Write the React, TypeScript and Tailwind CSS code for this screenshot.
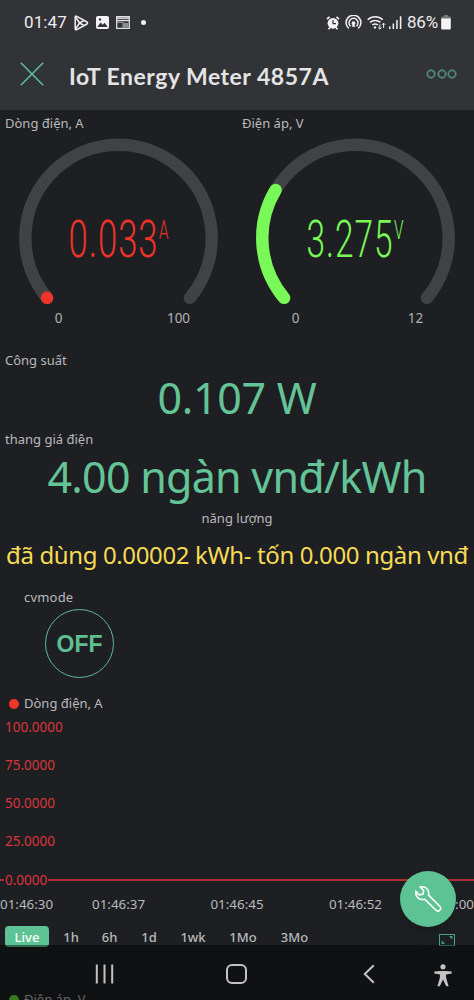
const ui = "font-['Noto_Sans',sans-serif]";

function polar(cx: number, cy: number, r: number, deg: number) {
  const a = (deg * Math.PI) / 180;
  return { x: cx + r * Math.cos(a), y: cy + r * Math.sin(a) };
}

// Arc opens at the bottom, 260 degrees in total
function arc(from: number, to: number) {
  const s = polar(118.5, 106, 93.2, from);
  const e = polar(118.5, 106, 93.2, to);
  return `M${s.x} ${s.y}A93.2 93.2 0 ${to - from > 180 ? 1 : 0} 1 ${e.x} ${e.y}`;
}

type GaugeProps = {
  label: string;
  value: string;
  unit: string;
  max: string;
  maxX: number;
  color: string;
  sweep: number;
  valueX: number;
  valueWidth: number;
};

function Gauge({ label, value, unit, max, maxX, color, sweep, valueX, valueWidth }: GaugeProps) {
  return (
    <div className="w-[237px] pt-1">
      <div className="pl-[5px] text-[13px] leading-[18px] text-[#b9babc]">{label}</div>
      <svg width="237" height="200" viewBox="0 0 237 200" className="block">
        <path d={arc(140, 400)} fill="none" stroke="#414246" strokeWidth="12.4" strokeLinecap="round" />
        <path d={arc(140, 140 + sweep)} fill="none" stroke={color} strokeWidth="12.4" strokeLinecap="round" />
        <text x={valueX} y="124.5" fill={color} fontFamily="Roboto, sans-serif" fontWeight="300" fontSize="52" letterSpacing="1.5" textLength={valueWidth} lengthAdjust="spacingAndGlyphs">
          {value}
        </text>
        <text x={valueX + valueWidth + 0.5} y="106.5" fill={color} fontFamily="Roboto, sans-serif" fontWeight="300" fontSize="26" textLength="9.5" lengthAdjust="spacingAndGlyphs">
          {unit}
        </text>
        <text x="58.5" y="190.8" textAnchor="middle" fill="#b0b1b3" fontFamily="Noto Sans, sans-serif" fontSize="13.5">0</text>
        <text x={maxX} y="190.8" textAnchor="middle" fill="#b0b1b3" fontFamily="Noto Sans, sans-serif" fontSize="13.5">{max}</text>
      </svg>
    </div>
  );
}

function StatusBar() {
  return (
    <div className="flex h-[44px] items-center pl-6 pr-[23px] font-[Roboto,sans-serif] text-[17px] text-[#ededee]">
      <span className="mt-[2px] w-[50px] tracking-[0.1px]">01:47</span>
      <svg width="15" height="16" viewBox="0 0 15 16" fill="none" stroke="#f1f1f2" strokeWidth="1.5" strokeLinejoin="round" className="mt-px">
        <path d="M1.2 2.2Q1.4.8 2.8 1.3L13 7q1 1 0 2L2.8 14.7q-1.4.5-1.6-.9z" />
        <path d="M1.5 2 5.6 8 1.5 14M5.6 8l4.6-2.6M5.6 8l4.6 2.6" />
      </svg>
      <svg width="13" height="13" viewBox="0 0 13 13" className="ml-[7px] mt-px">
        <rect width="13" height="13" rx="2" fill="#f4f4f5" />
        <path d="M1.3 11 4.6 6.4 6.8 8.8 8.6 6.8 11.7 11z" fill="#323337" />
        <circle cx="4" cy="3.4" r="1.2" fill="#323337" />
      </svg>
      <svg width="14" height="13" viewBox="0 0 14 13" className="ml-[7px] mt-px">
        <path d="M.7.7h12.6v11.6H.7zM.7 4.6h12.6" fill="none" stroke="#e0e0e1" strokeWidth="1.3" />
        <path d="M1 1.2h12v2H1z" fill="#c9c9cb" />
        <path d="M7.3 7h5v4.6h-5z" fill="#8e8f92" />
        <path d="M1 6.4h6M7 6v6" stroke="#b5b5b8" strokeWidth=".8" />
      </svg>
      <span className="ml-[11px] mt-px h-[5px] w-[5px] rounded-full bg-[#f1f1f2]" />
      <div className="flex-1" />
      <svg width="14" height="14" viewBox="0 0 14 14" className="mt-px">
        <circle cx="7" cy="7.3" r="5.4" fill="#f4f4f5" />
        <path d="M1 3 3.6.9M13 3 10.4.9M2.5 13.2 4 11.5M11.5 13.2 10 11.5" stroke="#f4f4f5" strokeWidth="1.7" />
        <path d="M7 4v3.6h3" fill="none" stroke="#323337" strokeWidth="1.2" />
      </svg>
      <svg width="17" height="15" viewBox="0 0 17 15" fill="none" stroke="#f1f1f2" strokeWidth="1.5" className="ml-[5px] mt-px">
        <path d="M3.8 13.4a7.4 7.4 0 1 1 9.4 0M5.5 11.2a4.5 4.5 0 1 1 6 0" />
        <circle cx="8.5" cy="8.2" r="1.9" fill="#f1f1f2" stroke="none" />
        <path d="M6.6 11.8h3.8L8.5 8z" fill="#f1f1f2" stroke="none" />
      </svg>
      <svg width="19" height="15" viewBox="0 0 19 15" fill="none" stroke="#f1f1f2" strokeWidth="1.5" className="ml-[5px] mt-px">
        <path d="M.7 4.6a11 11 0 0 1 15 0M3 7.4a7.8 7.8 0 0 1 10.4 0M5.3 10a4.6 4.6 0 0 1 5.6 0" />
        <circle cx="8" cy="12.4" r="1.2" fill="#f1f1f2" stroke="none" />
        <path d="M12.8 9.5v4.6M11.2 12.5l1.6 1.6 1.6-1.6M16.6 13V8.3M15 9.8l1.6-1.6 1.6 1.6" strokeWidth="1" />
      </svg>
      <svg width="13" height="13" viewBox="0 0 13 13" className="ml-[3px] mt-px" fill="#f1f1f2">
        <path d="M0 10.5h1.5V13H0zM3.6 7.5h1.5V13H3.6zM7.2 4h1.5v9H7.2zM10.8.2h1.6V13h-1.6z" />
      </svg>
      <span className="ml-[5px] mt-[2px] w-[34px] whitespace-nowrap text-[17px] tracking-[-0.2px]">86%</span>
      <svg width="10" height="15" viewBox="0 0 10 15" className="mt-px">
        <path d="M3 0h4v1.6h1.6a1.2 1.2 0 0 1 1.2 1.2V5H.2V2.8a1.2 1.2 0 0 1 1.2-1.2H3z" fill="#77787b" />
        <path d="M.2 3.5h9.6v9.8a1.2 1.2 0 0 1-1.2 1.2H1.4A1.2 1.2 0 0 1 .2 13.3z" fill="#f4f4f5" />
      </svg>
    </div>
  );
}

function TitleBar() {
  return (
    <div className="flex h-[66px] items-center pb-[6px] pl-[20px] pr-[18px]">
      <svg width="24" height="24" viewBox="0 0 24 24" stroke="#5ac395" strokeWidth="1.5" fill="none">
        <path d="m.8.8 22.4 22.4M23.2.8.8 23.2" />
      </svg>
      <h1 className="ml-[25px] mt-[3px] flex-1 whitespace-nowrap font-[Lato,sans-serif] text-[23px] font-bold leading-[30px] tracking-[0.5px] text-[#e4e4e5]">IoT Energy Meter 4857A</h1>
      <div className="flex gap-[2.5px]">
        {[0, 1, 2].map((i) => (
          <span key={i} className="h-2 w-2 rounded-full border-[1.5px] border-[#5aad8c] outline-[0.5px] outline-[#5aad8c]/40" />
        ))}
      </div>
    </div>
  );
}

const scale = ["100.0000", "75.0000", "50.0000", "25.0000"];
const ranges = [
  { name: "1h", width: "w-[44px]" },
  { name: "6h", width: "w-[33px]" },
  { name: "1d", width: "w-[46px]" },
  { name: "1wk", width: "w-[42px]" },
  { name: "1Mo", width: "w-[58px]" },
  { name: "3Mo", width: "w-[45px]" },
];

function Chart() {
  return (
    <section className="h-[266px]">
      <div className="flex h-[18px] items-center gap-[5px] pl-[9px] text-[13px] text-[#b9babc]">
        <span className="h-[10px] w-[10px] rounded-full bg-[#f0372b]" />
        Dòng điện, A
      </div>
      <div className="mt-[-5px] flex flex-col pl-[5px] text-[13.5px] text-[#d9363a]">
        {scale.map((v) => (
          <div key={v} className="flex h-[38.1px] items-center">{v}</div>
        ))}
      </div>
      <div className="mt-[8px] flex h-[24px] items-center text-[13.5px] text-[#d9363a]">
        <span className="h-[2px] w-[4px] bg-[#a92f33]" />
        <span className="mx-px">0.0000</span>
        <span className="h-[2px] flex-1 bg-[#a92f33]" />
      </div>
      <div className="mt-[2px] flex h-[20px] items-center overflow-hidden whitespace-nowrap text-[13.4px] text-[#b9babc]">
        <span className="w-[92px]">01:46:30</span>
        <span className="w-[118.5px]">01:46:37</span>
        <span className="w-[118.5px]">01:46:45</span>
        <span className="w-[92px]">01:46:52</span>
        <span>01:47:00</span>
      </div>
      <div className="mt-[12px] flex h-[21px] items-center text-[13px] font-medium text-[#b9babc]">
        <span className="ml-[5px] flex h-[21px] w-[44px] items-center justify-center rounded bg-[#5ec394] pt-px text-white">Live</span>
        {ranges.map((r) => (
          <span key={r.name} className={`${r.width} pt-px text-center`}>{r.name}</span>
        ))}
        <svg width="16" height="12" viewBox="0 0 16 12" className="ml-auto mr-[19px] mt-[7px]" fill="none" stroke="#3fae88">
          <rect x=".5" y=".5" width="15" height="11" />
          <path d="M3 7v2.5h2.5M3 9.5 5 7.7M10.5 2.5H13V5M13 2.5l-2 1.8" />
        </svg>
      </div>
    </section>
  );
}

function NavBar() {
  return (
    <nav className="absolute bottom-0 left-0 flex h-[55px] w-full items-center bg-black/45 pl-[95px]">
      <svg width="19" height="20" viewBox="0 0 19 20" className="mt-[3px]" stroke="#c3c3c4" strokeWidth="2">
        <path d="M1.8.5v19M9.5.5v19M17.2.5v19" />
      </svg>
      <span className="ml-[112px] mt-[3px] h-[20px] w-[21px] rounded-[6px] border-2 border-[#c3c3c4]" />
      <svg width="12" height="20" viewBox="0 0 12 20" className="ml-[116px] mt-[3px]" fill="none" stroke="#c3c3c4" strokeWidth="2">
        <path d="M10.8 1.2 1.8 10l9 8.8" />
      </svg>
      <svg width="18" height="23" viewBox="0 0 18 23" className="ml-[59px] mt-[5px]" fill="#c3c3c4">
        <circle cx="9" cy="2.8" r="2.6" />
        <path d="M.3 7.5V9.5L6 10.6 5.8 14 3.4 22.3h2.4L9 15.5l3.2 6.8h2.4L12.2 14 12 10.6l5.7-1.1V7.5L12 7H6z" />
      </svg>
    </nav>
  );
}

export default function App() {
  return (
    <main className={`relative h-[1000px] w-[474px] overflow-hidden bg-[#1e1f22] ${ui}`}>
      <header className="h-[110px] bg-[#323337]">
        <StatusBar />
        <TitleBar />
      </header>

      <section className="flex h-[241px]">
        <Gauge label="Dòng điện, A" value="0.033" unit="A" max="100" maxX={178.5} color="#ee3329" sweep={0.1} valueX={68.5} valueWidth={90} />
        <Gauge label="Điện áp, V" value="3.275" unit="V" max="12" maxX={178.5} color="#78f957" sweep={71} valueX={69.5} valueWidth={87} />
      </section>

      <section className="h-[79px] text-[13px] leading-[18px] text-[#b9babc]">
        <div className="pl-[5px]">Công suất</div>
        <div className="whitespace-nowrap text-center text-[43px] leading-[57px] tracking-[-0.3px] text-[#64c497]">0.107 W</div>
      </section>
      <section className="h-[79px] text-[13px] leading-[18px] text-[#b9babc]">
        <div className="pl-[5px]">thang giá điện</div>
        <div className="whitespace-nowrap text-center text-[43px] leading-[57px] tracking-[-0.75px] text-[#64c497]">4.00 ngàn vnđ/kWh</div>
      </section>
      <section className="h-[79px] text-center text-[13px] leading-[18px] text-[#b9babc]">
        <div>năng lượng</div>
        <div className="mt-[10px] whitespace-nowrap text-[24px] leading-[36px] tracking-[-0.38px] text-[#f6db55]">đã dùng 0.00002 kWh- tốn 0.000 ngàn vnđ</div>
      </section>

      <section className="h-[107px]">
        <div className="pl-[24px] text-[13px] leading-[18px] tracking-[0.2px] text-[#b9babc]">cvmode</div>
        <div className="ml-[45px] mt-[3px] flex h-[69px] w-[69px] items-center justify-center rounded-full border-[1.5px] border-[#5dbb91] pt-px font-['Liberation_Sans',sans-serif] text-[23px] font-bold text-[#5fbf93]">OFF</div>
      </section>

      <Chart />

      <div className="mt-[30px] flex h-[18px] items-center gap-[5px] pl-[9px] text-[13px] text-[#b9babc]">
        <span className="h-[10px] w-[10px] rounded-full bg-[#5fe03d]" />
        Điện áp, V
      </div>

      <button className="absolute left-[400px] top-[871px] flex h-[56px] w-[56px] items-center justify-center rounded-full bg-[#5ec394] shadow-lg">
        <svg width="28" height="28" viewBox="0 0 30 30" fill="none" stroke="#fff" strokeWidth="1.7" strokeLinejoin="round">
          <path d="M6.5 2.2C12 .6 17 5 15.6 10.8L27.6 22.8a2.8 2.8 0 0 1-4 4.2L11.4 15.2C6 16.8 1 12.6 2 6.6L5.6 10.6 9.6 9.8 10.4 6z" />
        </svg>
      </button>

      <NavBar />
    </main>
  );
}
